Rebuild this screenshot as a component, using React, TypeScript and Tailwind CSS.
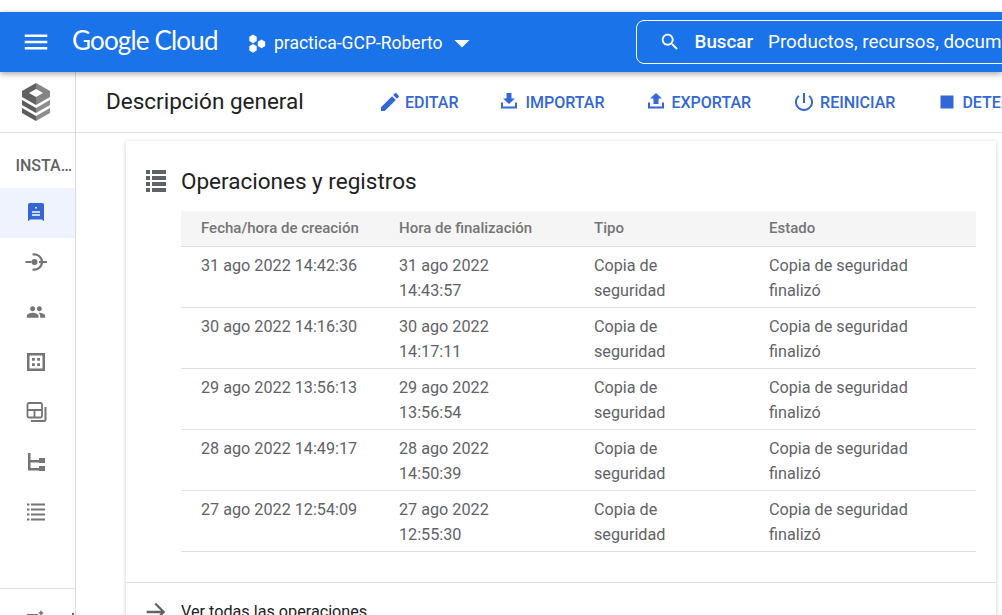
const P = ({ d, className }: { d: string; className?: string }) => (
  <svg viewBox="0 0 24 24" className={className} fill="currentColor"><path d={d} /></svg>
);

const rows = [
  ["31 ago 2022 14:42:36", "31 ago 2022 14:43:57"],
  ["30 ago 2022 14:16:30", "30 ago 2022 14:17:11"],
  ["29 ago 2022 13:56:13", "29 ago 2022 13:56:54"],
  ["28 ago 2022 14:49:17", "28 ago 2022 14:50:39"],
  ["27 ago 2022 12:54:09", "27 ago 2022 12:55:30"],
];

const Logo = () => (
  <svg viewBox="0 0 28 38" className="w-[28px] h-[38px]">
    <path fill="#616161" fillRule="evenodd" d="M14 0 L14 6 L7 10 L14 14 L14 22 L0 14 V8 Z" />
    <path fill="#858585" fillRule="evenodd" d="M14 0 L28 8 V14 L14 22 L14 14 L21 10 L14 6 Z" />
    <path fill="#5c5c5c" d="M0 17 L14 25 V30 L0 22 Z" />
    <path fill="#8c8c8c" d="M28 17 L14 25 V30 L28 22 Z" />
    <path fill="#5c5c5c" d="M0 25 L14 33 V38 L0 30 Z" />
    <path fill="#8c8c8c" d="M28 25 L14 33 V38 L28 30 Z" />
  </svg>
);

const side = [
  <svg key="a" viewBox="0 0 24 24" className="w-6 h-6 text-[#3367d6]" fill="currentColor"><path d="M6 3h12a2 2 0 0 1 2 2v16h-.5l-1.500-1.500H6L4.500 21H4V5a2 2 0 0 1 2-2z" /><path fill="#fff" d="M11.200 7h1.600v1.600h-1.600zM8 11.200h8v1.500H8zM8 14.300h8v1.500H8z" /></svg>,
  <svg key="b" viewBox="0 0 24 24" className="w-6 h-6 text-[#757575]" fill="none" stroke="currentColor" strokeWidth="2.200"><circle cx="10.500" cy="12" r="3" fill="currentColor" stroke="none" /><path d="M1.500 12h6M15 12h8" /><path d="M8.500 4.500a7.800 7.800 0 0 1 9.500 7.500 7.800 7.800 0 0 1-9.500 7.500" /></svg>,
  <P key="c" d="M16 11c1.660 0 2.990-1.340 2.990-3S17.660 5 16 5c-1.660 0-3 1.340-3 3s1.340 3 3 3zm-8 0c1.660 0 2.990-1.340 2.990-3S9.660 5 8 5C6.340 5 5 6.340 5 8s1.340 3 3 3zm0 2c-2.330 0-7 1.170-7 3.500V19h14v-2.500c0-2.330-4.670-3.500-7-3.500zm8 0c-.290 0-.620.020-.970.050 1.160.840 1.970 1.970 1.970 3.450V19h6v-2.500c0-2.330-4.670-3.500-7-3.500z" className="w-5 h-5 text-[#757575]" />,
  <svg key="d" viewBox="0 0 24 24" className="w-6 h-6 text-[#757575]" fill="currentColor"><path fillRule="evenodd" d="M3 3h18v18H3zM5.500 5.500v13h13v-13z" /><path d="M8 8h2.800v2.800H8zM13.200 8H16v2.800h-2.800zM8 13.200h2.800V16H8zM13.200 13.200H16V16h-2.800z" /></svg>,
  <svg key="e" viewBox="0 0 24 24" className="w-6 h-6 text-[#757575]" fill="none" stroke="currentColor" strokeWidth="1.800"><rect x="3.500" y="3" width="14.500" height="14.500" rx="1.500" /><path d="M3.500 10h14.500M10.500 10v7.500" /><path d="M21.500 7v12.500a1.500 1.500 0 0 1-1.500 1.500H7" strokeWidth="2" /></svg>,
  <svg key="f" viewBox="0 0 24 24" className="w-6 h-6 text-[#757575]" fill="currentColor"><path d="M4 3h2.500v7H15V8h6v5h-6v-.5H6.500V18H15v-2h6v5h-6v-.5H4z" /></svg>,
  <svg key="g" viewBox="0 0 24 24" className="w-6 h-6 text-[#757575]" fill="currentColor"><path d="M3 3.500h2.500v2H3zM7 3.500h14v2H7zM3 8.500h2.500v2H3zM7 8.500h14v2H7zM3 13.500h2.500v2H3zM7 13.500h14v2H7zM3 18.500h2.500v2H3zM7 18.500h14v2H7z" /></svg>,
];

const actions: [string, string, string, string][] = [
  ["EDITAR", "M3 17.250V21h3.750L17.810 9.940l-3.750-3.750L3 17.250zM20.710 7.040c.390-.390.390-1.020 0-1.410l-2.340-2.340c-.390-.390-1.020-.390-1.410 0l-1.830 1.830 3.750 3.750 1.830-1.830z", "gap-[3px]", "mr-[39px]"],
  ["IMPORTAR", "M9.500 3h5v5.500H18l-6 5.500-6-5.500h3.500zM4 12.500h2v4h12v-4h2v6H4z", "gap-[4px]", "mr-[40px]"],
  ["EXPORTAR", "M9.500 14h5V8.500H18L12 3 6 8.500h3.500zM4 12.500h2v4h12v-4h2v6H4z", "gap-[3px]", "mr-[41px]"],
  ["REINICIAR", "M13 3h-2v10h2V3zm4.830 2.170l-1.420 1.420C17.990 7.860 19 9.810 19 12c0 3.870-3.130 7-7 7s-7-3.130-7-7c0-2.190 1.010-4.140 2.580-5.420L6.170 5.170C4.230 6.820 3 9.260 3 12c0 4.970 4.030 9 9 9s9-4.030 9-9c0-2.740-1.230-5.180-3.170-6.830z", "gap-[4px]", "mr-[40px]"],
  ["DETENER", "M5.500 5.500h13v13h-13z", "gap-[3px]", ""],
];

export default function App() {
  return (
    <div className="w-full h-[615px] overflow-hidden bg-white flex flex-col pt-3 font-['Roboto',sans-serif]">
      <header className="relative z-10 h-[60px] shrink-0 bg-[#1a73e8] text-white flex items-center overflow-hidden shadow-[0_2px_6px_rgba(0,0,0,0.35)]">
        <div className="w-[72px] shrink-0 flex justify-center">
          <P d="M3 18h18v-2H3v2zm0-5h18v-2H3v2zm0-7v2h18V6H3z" className="w-[30px] h-[30px]" />
        </div>
        <div className="w-[175px] shrink-0 text-[26px] tracking-[-0.83px] font-['Lato',sans-serif] leading-none -mt-1 whitespace-nowrap">Google Cloud</div>
        <svg viewBox="0 0 20 20" className="w-5 h-5 shrink-0 mt-[2px]" fill="currentColor">
          <path d="M6 1.500 9.700 3.700V8L6 10.200 2.300 8V3.700z" />
          <path d="M6 11 9.700 13.200v4.300L6 19.700 2.300 17.500v-4.300z" />
          <path d="M14.500 6.500 18.200 8.700V13l-3.700 2.200L10.800 13V8.700z" />
        </svg>
        <span className="ml-[7px] text-[17.500px] shrink-0 pt-[3px]">practica-GCP-Roberto</span>
        <P d="M7 10l5 5 5-5z" className="w-[36px] h-[36px] ml-[1px] shrink-0 mt-[1px]" />
        <div className="ml-[156px] shrink-0 w-[600px] h-[44px] -mt-px rounded-lg border border-white flex items-center pl-[22px] text-[18.800px]">
          <P d="M15.500 14h-.790l-.280-.270C15.410 12.590 16 11.110 16 9.500 16 5.910 13.090 3 9.500 3S3 5.910 3 9.500 5.910 16 9.500 16c1.610 0 3.090-.590 4.230-1.570l.270.280v.790l5 4.990L20.490 19l-4.990-5zm-6 0C7.010 14 5 11.990 5 9.500S7.010 5 9.500 5 14 7.010 14 9.500 11.990 14 9.500 14z" className="w-[22px] h-[22px] shrink-0" />
          <span className="ml-[14px] font-medium pt-[1px]">Buscar</span>
          <span className="ml-[15px] whitespace-nowrap pt-[1px]">Productos, recursos, documentos</span>
        </div>
      </header>
      <div className="flex-1 min-h-0 flex">
        <aside className="w-[76px] shrink-0 border-r border-[#dadce0] flex flex-col relative">
          <div className="h-[61px] shrink-0 flex items-center justify-center pr-[3px] border-b border-[#e0e0e0]">
            <Logo />
          </div>
          <div className="h-[55px] shrink-0 flex items-center justify-end pr-[3px] pt-[10px] text-[16px] font-medium text-[#5f6368] whitespace-nowrap">INSTA…</div>
          {side.map((icon, i) => (
            <div key={i} className={`h-[50px] shrink-0 flex items-center justify-center pb-[2px] pr-[3px] ${i === 0 ? "bg-[#eef3fd]" : ""}`}>{icon}</div>
          ))}
          <div className="mt-[50px] border-t border-[#e0e0e0] h-[30px] flex justify-center pt-[19px] pr-[3px]">
            <svg viewBox="0 0 24 24" className="w-6 h-6 text-[#757575] shrink-0" fill="currentColor"><path d="M3 6h11v2H3zM17 2l1 2 2 1-2 1-1 2-1-2-2-1 2-1z" /></svg>
          </div>
          <span className="absolute right-[1px] bottom-0 w-[2px] h-[2px] bg-[#666]" />
        </aside>
        <main className="flex-1 min-w-0 flex flex-col overflow-hidden">
          <div className="h-[61px] shrink-0 flex items-center border-b border-[#e0e0e0] pl-[30px] overflow-hidden">
            <h1 className="w-[272px] shrink-0 text-[22.500px] text-[#202124] font-normal whitespace-nowrap">Descripción general</h1>
            {actions.map(([label, d, gap, mr]) => (
              <div key={label} className={`flex items-center shrink-0 text-[#3367d6] text-[16px] font-medium ${gap} ${mr}`}>
                <P d={d} className="w-6 h-6" />
                <span className="pt-[2px]">{label}</span>
              </div>
            ))}
          </div>
          <div className="pl-[50px] pt-[8px] pr-[6px]">
            <section className="bg-white rounded-[2px] shadow-[0_1px_4px_rgba(0,0,0,0.2)] h-[500px]">
              <div className="h-[70px] flex items-center pl-[20px] pt-[12px]">
                <svg viewBox="0 0 20 22" className="w-5 h-[22px] -mt-[2px] text-[#5f6368] shrink-0" fill="currentColor"><path d="M0 0h4v4H0zM6 0h14v4H6zM0 6h4v4H0zM6 6h14v4H6zM0 12h4v4H0zM6 12h14v4H6zM0 18h4v4H0zM6 18h14v4H6z" /></svg>
                <h2 className="ml-[15px] text-[22.500px] text-[#202124] font-normal">Operaciones y registros</h2>
              </div>
              <div className="pl-[55px] pr-[20px]">
                <table className="w-full table-fixed border-collapse text-[16.200px] leading-[25px] text-[#5f6368]">
                  <colgroup>
                    <col className="w-[198px]" />
                    <col className="w-[195px]" />
                    <col className="w-[175px]" />
                    <col />
                  </colgroup>
                  <thead>
                    <tr className="h-[35px] bg-[#f5f5f5] border-b border-[#dadce0] text-[15px] font-medium text-[#757575]">
                      {["Fecha/hora de creación", "Hora de finalización", "Tipo", "Estado"].map((h) => (
                        <th key={h} className="text-left font-medium pl-5 whitespace-nowrap">{h}</th>
                      ))}
                    </tr>
                  </thead>
                  <tbody>
                    {rows.map(([a, b]) => (
                      <tr key={a} className="border-b border-[#e0e0e0]">
                        <td className="align-top pl-5 pt-[6px] pb-[4px] whitespace-nowrap">{a}</td>
                        <td className="align-top pl-5 pr-5 pt-[6px] pb-[4px]">{b}</td>
                        <td className="align-top pl-5 pr-5 pt-[6px] pb-[4px]">Copia de seguridad</td>
                        <td className="align-top pl-5 pr-5 pt-[6px] pb-[4px]">Copia de seguridad finalizó</td>
                      </tr>
                    ))}
                  </tbody>
                </table>
              </div>
              <div className="mt-[30px] border-t border-[#e0e0e0] flex items-center pl-[16px] h-[60px]">
                <P d="M12 4l-1.410 1.410L16.170 11H4v2h12.170l-5.580 5.590L12 20l8-8z" className="w-[28px] h-[28px] text-[#5f6368] shrink-0" />
                <span className="ml-[11px] text-[16.200px] text-[#202124] whitespace-nowrap">Ver todas las operaciones</span>
              </div>
            </section>
          </div>
        </main>
      </div>
    </div>
  );
}
